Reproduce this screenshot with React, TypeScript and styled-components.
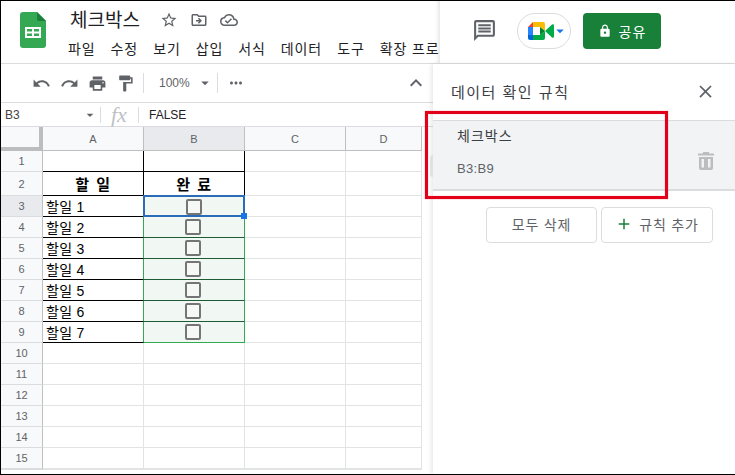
import React from "react";
import styled, { createGlobalStyle } from "styled-components";
import {
  MdAdd,
  MdArrowDropDown,
  MdClose,
  MdExpandLess,
  MdFormatPaint,
  MdLock,
  MdMoreHoriz,
  MdOutlineCloudDone,
  MdOutlineDriveFileMove,
  MdOutlineMessage,
  MdPrint,
  MdRedo,
  MdStarBorder,
  MdUndo,
} from "react-icons/md";

const GlobalStyle = createGlobalStyle`
  html, body {
    margin: 0;
    padding: 0;
    background: #fff;
  }
  * {
    box-sizing: border-box;
  }
`;

const KR = `"Liberation Sans", "Noto Sans CJK KR", sans-serif`;

const Frame = styled.div`
  position: relative;
  width: 735px;
  height: 475px;
  overflow: hidden;
  background: #fff;
  border: 1px solid #000;
  border-right: 0;
  font-family: ${KR};
  color: #3c4043;
`;

const Header = styled.header`
  display: flex;
  height: 63px;
  border-bottom: 1px solid #dadce0;
`;

const DocArea = styled.div`
  display: flex;
  width: 439px;
  flex: none;
  padding: 11px 0 0 19px;
  overflow: hidden;
  white-space: nowrap;
  box-shadow: inset -6px 0 5px -5px #dcdcdc;
`;

const DocText = styled.div`
  margin: -3px 0 0 22px;
`;

const TitleRow = styled.div`
  display: flex;
  align-items: center;
  height: 18px;
  margin-left: 2px;
`;

const DocTitle = styled.span`
  width: 90px;
  font-size: 19px;
  color: #202124;
`;

const TitleIcon = styled.span`
  display: flex;
  width: 30px;
  margin-top: 4px;
  font-size: 18px;
  color: #5f6368;
`;

const Menu = styled.nav`
  display: flex;
  gap: 15px;
  margin-top: 11px;
  font-size: 14px;
  letter-spacing: 0.9px;
  color: #202124;
`;

const ShareArea = styled.div`
  display: flex;
  align-items: flex-start;
  padding: 12px 0 0 32px;
`;

const CommentIcon = styled.span`
  display: flex;
  margin: 5px 20px 0 0;
  font-size: 25px;
  color: #5f6368;
`;

const MeetPill = styled.div`
  display: flex;
  align-items: center;
  width: 54px;
  height: 36px;
  margin-right: 12px;
  padding-left: 10px;
  border: 1px solid #dadce0;
  border-radius: 18px;
  color: #1a73e8;
  font-size: 18px;
`;

const MeetCaret = styled(MdArrowDropDown)`
  flex: none;
  margin-left: -3px;
`;

const ShareButton = styled.div`
  display: flex;
  align-items: center;
  justify-content: center;
  gap: 7px;
  width: 78px;
  height: 36px;
  border-radius: 4px;
  background: #188038;
  color: #fff;
  font-size: 14px;
  letter-spacing: 1px;
`;

const Body = styled.div`
  display: flex;
  height: 410px;
`;

const SheetColumn = styled.div`
  width: 432px;
  flex: none;
  overflow: hidden;
`;

const Toolbar = styled.div`
  display: flex;
  align-items: center;
  height: 39px;
  padding: 0 5px 0 26px;
  border-bottom: 1px solid #dadce0;
  color: #5f6368;
`;

const ToolIcon = styled.span`
  display: flex;
  justify-content: center;
  width: 28px;
  font-size: 19px;
`;

const ToolSeparator = styled.span<{ $before: number; $after: number }>`
  width: 1px;
  height: 20px;
  margin: 0 ${(p) => p.$after}px 0 ${(p) => p.$before}px;
  background: #dadce0;
`;

const Zoom = styled.span`
  width: 37px;
  font-size: 12px;
  color: #5f6368;
`;

const Spacer = styled.span`
  flex: 1;
`;

const FormulaBar = styled.div`
  display: flex;
  align-items: center;
  height: 24px;
  border-bottom: 1px solid #dadce0;
  font-size: 12px;
  color: #202124;
`;

const NameBox = styled.div`
  display: flex;
  align-items: center;
  justify-content: space-between;
  width: 100px;
  height: 16px;
  padding: 0 2px 0 4px;
  border-right: 1px solid #dadce0;
  color: #444;
`;

const FxLabel = styled.div`
  width: 38px;
  height: 16px;
  padding-left: 10px;
  border-right: 1px solid #dadce0;
  font-family: "Liberation Serif", serif;
  font-style: italic;
  font-size: 22px;
  line-height: 15px;
  color: #bdc1c6;
`;

const FormulaValue = styled.div`
  padding-left: 10px;
`;

const Grid = styled.div`
  display: grid;
  grid-template-columns: 42px 101px 101px 101px 76px;
  grid-template-rows: 24px 21px 24px repeat(13, 21px);
  width: 421px;
  border-right: 1px solid #e2e3e3;
`;

const Corner = styled.div`
  background: #f8f9fa;
  border-right: 4px solid #bdbdbd;
  border-bottom: 4px solid #bdbdbd;
`;

const ColHead = styled.div<{ $active?: boolean }>`
  display: flex;
  align-items: center;
  justify-content: center;
  background: ${(p) => (p.$active ? "#e8eaed" : "#f8f9fa")};
  border-right: 1px solid #c0c0c0;
  border-bottom: 1px solid #c0c0c0;
  font-size: 11px;
  color: #5f6368;
`;

const RowHead = styled.div<{ $active?: boolean }>`
  display: flex;
  align-items: center;
  justify-content: center;
  background: ${(p) => (p.$active ? "#e8eaed" : "#f8f9fa")};
  border-right: 1px solid #c0c0c0;
  border-bottom: 1px solid #dadce0;
  font-size: 11px;
  color: #5f6368;
`;

const Cell = styled.div`
  border-right: 1px solid #e2e3e3;
  border-bottom: 1px solid #e2e3e3;
`;

const BlackCell = styled.div<{ $heading?: boolean; $rangeEdge?: boolean }>`
  display: flex;
  align-items: center;
  justify-content: ${(p) => (p.$heading ? "center" : "flex-start")};
  padding-left: ${(p) => (p.$heading ? 1 : 3)}px;
  border-right: 1px solid ${(p) => (p.$rangeEdge ? "#34a853" : "#000")};
  border-bottom: 1px solid #000;
  font-size: ${(p) => (p.$heading ? 15 : 14)}px;
  font-weight: ${(p) => (p.$heading ? 700 : 400)};
  letter-spacing: ${(p) => (p.$heading ? 1.5 : 0.3)}px;
  color: #000;
`;

const CheckCell = styled.div<{ $last?: boolean }>`
  display: flex;
  align-items: center;
  justify-content: center;
  background: #f1f8f3;
  border-right: 1px solid #34a853;
  border-bottom: 1px solid ${(p) => (p.$last ? "#34a853" : "#1f5c33")};
`;

const SelectedCell = styled.div`
  position: relative;
  display: flex;
  align-items: center;
  justify-content: center;
  background: #f1f8f3;

  &::after {
    content: "";
    position: absolute;
    inset: -1px 0 0 -1px;
    border: 2px solid #2b6cb8;
  }
`;

const FillHandle = styled.span`
  position: absolute;
  z-index: 1;
  right: -2px;
  bottom: -2px;
  width: 6px;
  height: 6px;
  background: #1a73e8;
`;

const Check = styled.span`
  width: 16px;
  height: 16px;
  margin-right: 2px;
  border: 2px solid #757575;
  border-radius: 2px;
  background: #f6f8f6;
`;

const Panel = styled.aside`
  position: relative;
  flex: 1;
  background: #fff;
  box-shadow: -2px 0 4px rgba(0, 0, 0, 0.09);
`;

const PanelHead = styled.div`
  display: flex;
  align-items: center;
  justify-content: space-between;
  height: 56px;
  padding: 0 19px 2px 18px;
  font-size: 15px;
  letter-spacing: 1.5px;
  color: #3c4043;
`;

const CloseIcon = styled.span`
  display: flex;
  font-size: 21px;
  color: #5f6368;
`;

const RuleCard = styled.div`
  display: flex;
  align-items: center;
  justify-content: space-between;
  height: 71px;
  padding: 0 21px 0 24px;
  background: #f1f3f4;
  border-top: 1px solid #dadce0;
  border-bottom: 2px solid #dadce0;
`;

const RuleText = styled.div`
  margin-bottom: 9px;
`;

const RuleName = styled.div`
  margin-bottom: 16px;
  font-size: 14px;
  letter-spacing: 1px;
  color: #3c4043;
`;

const RuleRange = styled.div`
  font-size: 13px;
  letter-spacing: 0.3px;
  color: #5f6368;
`;

const TrashIcon = styled.svg`
  margin-top: 12px;
`;

const Grip = styled.span`
  position: absolute;
  left: -3px;
  top: 91px;
  width: 3px;
  height: 22px;
  border-radius: 3px 0 0 3px;
  background: #dfe1e5;
`;

const PanelActions = styled.div`
  display: flex;
  gap: 4px;
  padding: 16px 0 0 53px;
`;

const PanelButton = styled.div<{ $wide?: boolean }>`
  display: flex;
  align-items: center;
  justify-content: center;
  gap: 6px;
  width: ${(p) => (p.$wide ? 112 : 111)}px;
  height: 36px;
  padding-bottom: 2px;
  border: 1px solid #dadce0;
  border-radius: 4px;
  font-size: 14px;
  letter-spacing: 0.8px;
  color: #5f6368;
`;

const PlusIcon = styled.span`
  display: flex;
  font-size: 18px;
  color: #188038;
`;

const Callout = styled.div`
  position: absolute;
  left: 424px;
  top: 110px;
  width: 243px;
  height: 88px;
  border: 3px solid #e2001a;
  box-shadow: 0 0 1px rgba(226, 0, 26, 0.6), inset 0 0 1px rgba(226, 0, 26, 0.6);
  pointer-events: none;
`;

function SheetsLogo() {
  return (
    <svg width="26" height="36" viewBox="0 0 26 36" style={{ flex: "none" }}>
      <path d="M3 0h14l9 9v24a3 3 0 0 1-3 3H3a3 3 0 0 1-3-3V3a3 3 0 0 1 3-3z" fill="#34a853" />
      <path d="M17 0l9 9h-7a2 2 0 0 1-2-2z" fill="#188038" />
      <path
        d="M5 15h16v11H5z M7 17v2.500h5V17z M14 17v2.500h5V17z M7 21.500V24h5v-2.500z M14 21.500V24h5v-2.500z"
        fill="#fff"
        fillRule="evenodd"
      />
    </svg>
  );
}

function MeetLogo() {
  return (
    <svg width="26" height="18" viewBox="0 0 26 18" style={{ flex: "none" }}>
      <path d="M5 0v5H0z" fill="#ea4335" />
      <path d="M5 0h10a2 2 0 0 1 2 2v7l-5-4H5z" fill="#fbbc04" />
      <path d="M0 5h5v8H0z" fill="#2684fc" />
      <path d="M0 13h5v5H2a2 2 0 0 1-2-2z" fill="#0066da" />
      <path d="M5 13h7l5-4v7a2 2 0 0 1-2 2H5z" fill="#00ac47" />
      <path d="M12 5l5 4-5 4z" fill="#00832d" />
      <path d="M17 9l7-6.500a1.200 1.200 0 0 1 2 .9v11.200a1.200 1.200 0 0 1-2 .9z" fill="#00ac47" />
    </svg>
  );
}

function Trash() {
  return (
    <TrashIcon width="16" height="18" viewBox="0 0 16 18" fill="#bdbdbd">
      <path d="M5 0h6v1.500h5v2H0v-2h5z" />
      <path
        d="M1 5h14v11a2 2 0 0 1-2 2H3a2 2 0 0 1-2-2z M3.500 7v8.500h2.500V7z M10 7v8.500h2.500V7z"
        fillRule="evenodd"
      />
    </TrashIcon>
  );
}

const menus = ["파일", "수정", "보기", "삽입", "서식", "데이터", "도구", "확장 프로"];
const todo = ["할일 1", "할일 2", "할일 3", "할일 4", "할일 5", "할일 6", "할일 7"];
const emptyRows = [10, 11, 12, 13, 14, 15, 16];

export default function App() {
  return (
    <Frame>
      <GlobalStyle />
      <Header>
        <DocArea>
          <SheetsLogo />
          <DocText>
            <TitleRow>
              <DocTitle>체크박스</DocTitle>
              <TitleIcon><MdStarBorder /></TitleIcon>
              <TitleIcon><MdOutlineDriveFileMove /></TitleIcon>
              <TitleIcon><MdOutlineCloudDone /></TitleIcon>
            </TitleRow>
            <Menu>
              {menus.map((m) => (
                <span key={m}>{m}</span>
              ))}
            </Menu>
          </DocText>
        </DocArea>
        <ShareArea>
          <CommentIcon><MdOutlineMessage /></CommentIcon>
          <MeetPill>
            <MeetLogo />
            <MeetCaret />
          </MeetPill>
          <ShareButton>
            <MdLock size={14} />
            공유
          </ShareButton>
        </ShareArea>
      </Header>
      <Body>
        <SheetColumn>
          <Toolbar>
            <ToolIcon><MdUndo /></ToolIcon>
            <ToolIcon><MdRedo /></ToolIcon>
            <ToolIcon><MdPrint /></ToolIcon>
            <ToolIcon><MdFormatPaint /></ToolIcon>
            <ToolSeparator $before={4} $after={15} />
            <Zoom>100%</Zoom>
            <MdArrowDropDown size={18} />
            <ToolSeparator $before={3} $after={9} />
            <MdMoreHoriz size={18} />
            <Spacer />
            <MdExpandLess size={24} />
          </Toolbar>
          <FormulaBar>
            <NameBox>
              B3
              <MdArrowDropDown size={16} color="#5f6368" />
            </NameBox>
            <FxLabel>fx</FxLabel>
            <FormulaValue>FALSE</FormulaValue>
          </FormulaBar>
          <Grid>
            <Corner />
            <ColHead>A</ColHead>
            <ColHead $active>B</ColHead>
            <ColHead>C</ColHead>
            <ColHead>D</ColHead>

            <RowHead>1</RowHead>
            <BlackCell />
            <BlackCell />
            <Cell />
            <Cell />

            <RowHead>2</RowHead>
            <BlackCell $heading>할 일</BlackCell>
            <BlackCell $heading>완 료</BlackCell>
            <Cell />
            <Cell />

            {todo.map((t, i) => (
              <React.Fragment key={t}>
                <RowHead $active={i === 0}>{i + 3}</RowHead>
                <BlackCell $rangeEdge>{t}</BlackCell>
                {i === 0 ? (
                  <SelectedCell>
                    <Check />
                    <FillHandle />
                  </SelectedCell>
                ) : (
                  <CheckCell $last={i === todo.length - 1}>
                    <Check />
                  </CheckCell>
                )}
                <Cell />
                <Cell />
              </React.Fragment>
            ))}

            {emptyRows.map((r) => (
              <React.Fragment key={r}>
                <RowHead>{r === 16 ? "" : r}</RowHead>
                <Cell />
                <Cell />
                <Cell />
                <Cell />
              </React.Fragment>
            ))}
          </Grid>
        </SheetColumn>
        <Panel>
          <Grip />
          <PanelHead>
            데이터 확인 규칙
            <CloseIcon><MdClose /></CloseIcon>
          </PanelHead>
          <RuleCard>
            <RuleText>
              <RuleName>체크박스</RuleName>
              <RuleRange>B3:B9</RuleRange>
            </RuleText>
            <Trash />
          </RuleCard>
          <PanelActions>
            <PanelButton>모두 삭제</PanelButton>
            <PanelButton $wide>
              <PlusIcon><MdAdd /></PlusIcon>
              규칙 추가
            </PanelButton>
          </PanelActions>
        </Panel>
      </Body>
      <Callout />
    </Frame>
  );
}
